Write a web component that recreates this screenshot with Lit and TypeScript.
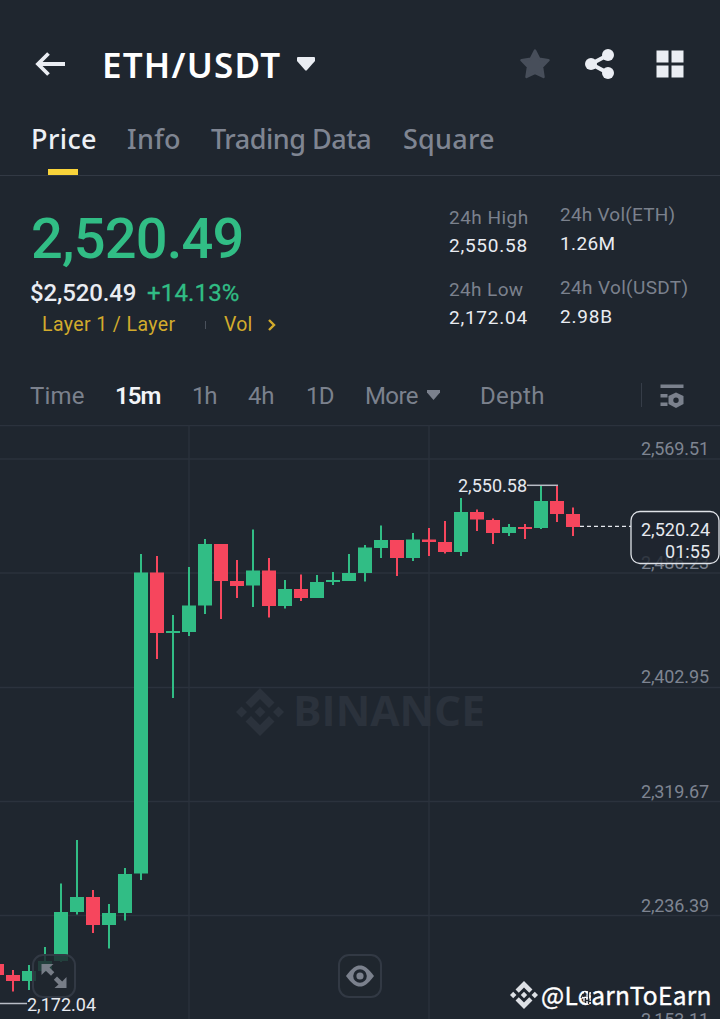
import { LitElement, html, svg, css } from "lit";
import { customElement, property } from "lit/decorators.js";

/** A single-line label whose tracking is adjusted to occupy a given width. */
@customElement("fit-text")
class FitText extends LitElement {
  @property() text = "";
  @property({ type: Number }) w = 0;
  static styles = css`
    :host { display: block; white-space: pre; }
    span { display: inline-block; }
  `;
  render() { return html`<span>${this.text}</span>`; }
  updated() {
    const span = this.renderRoot.querySelector("span") as HTMLElement;
    span.style.letterSpacing = "0px";
    const natural = span.getBoundingClientRect().width;
    const bearings = parseFloat(getComputedStyle(this).fontSize) * 0.06;
    const gaps = Math.max(1, this.text.length - 1);
    span.style.letterSpacing = `${(this.w + bearings - natural) / gaps}px`;
  }
}

type Candle = [x: number, up: 0 | 1, top: number, bottom: number, high: number, low: number];
const candles: Candle[] = [
  [-3, 0, 964, 975, 962, 976],
  [13, 0, 975, 981, 970, 991.5],
  [29, 1, 971, 981, 965, 990],
  [45, 1, 961, 971, 947, 972],
  [61, 1, 912, 961, 883.5, 962],
  [77, 1, 897, 912, 840, 914.5],
  [93, 0, 897, 925, 890, 933],
  [109, 1, 913, 925, 904, 948.5],
  [125, 1, 874, 913, 868, 920.5],
  [141, 1, 572.5, 873.5, 554, 880],
  [157, 0, 572.5, 633, 556, 659],
  [173, 1, 631, 633, 615, 698],
  [189, 1, 605.5, 632, 567, 636],
  [205, 1, 544, 605.5, 539, 614],
  [221, 0, 544, 581, 544, 619],
  [237, 0, 581, 586, 560, 598],
  [253, 1, 570.5, 585.5, 529.5, 607],
  [269, 0, 570.5, 606, 558, 617.5],
  [285, 1, 589, 606, 580, 608.5],
  [301, 0, 589, 598, 574.5, 601],
  [317, 1, 582, 598, 575, 598],
  [333, 1, 580, 582, 572, 585],
  [349, 1, 573, 581, 554, 581],
  [365, 1, 547.5, 573, 545, 581.5],
  [381, 1, 540, 548, 525.5, 558],
  [397, 0, 540, 558, 540, 576],
  [413, 1, 539.5, 558, 533, 561],
  [429, 0, 539.5, 542, 528, 556],
  [445, 0, 542, 552, 521, 553.5],
  [461, 1, 512, 552, 498, 556],
  [477, 0, 512, 519.5, 509.5, 531],
  [493, 0, 520, 533, 518.5, 544],
  [509, 1, 527, 533, 524, 536],
  [525, 0, 527, 529, 524, 539],
  [541, 1, 501, 528, 485, 529],
  [557, 0, 501, 514, 485, 522],
  [573, 0, 514, 527, 507.5, 536],
];

const axis: [string, number][] = [
  ["2,569.51", 455], ["2,486.23", 569], ["2,402.95", 683],
  ["2,319.67", 797.5], ["2,236.39", 911.5], ["2,153.11", 1026],
];

const logo = svg`
  <path d="M24 0 38.500 14.500 33 20 24 11 15 20 9.500 14.500Z"/>
  <path d="M24 48 38.500 33.500 33 28 24 37 15 28 9.500 33.500Z"/>
  <path d="M24 18.500 29.500 24 24 29.500 18.500 24Z"/>
  <path d="M5.500 18.500 11 24 5.500 29.500 0 24Z"/>
  <path d="M42.500 18.500 48 24 42.500 29.500 37 24Z"/>`;

@customElement("price-chart")
class PriceChart extends LitElement {
  static styles = css`
    :host { display: block; position: relative; height: 594px; overflow: hidden; }
    .plot { display: block; }
    .grid { stroke: #2b323d; stroke-width: 1.3; }
    .label { font: 18px Roboto, sans-serif; fill: #7e8491; }
    .mark { font: 18px Roboto, sans-serif; fill: #e6e9ef; }
    .dim { fill: #2b323c; }
    .brand { font: 700 41px "Open Sans", "Noto Sans", sans-serif; }
    .up { fill: #31bd85; }
    .down { fill: #f6465d; }
    .btn {
      position: absolute; top: 529px; box-sizing: border-box; width: 44px; height: 44px;
      border: 2px solid #323944; border-radius: 11px; background: rgba(31, 38, 47, 0.84);
      display: grid; place-items: center;
    }
    .expand { left: 32px; }
    .eye { left: 338px; }
    .credit {
      position: absolute; left: 510px; top: 555px; display: flex; align-items: center; gap: 3px;
      height: 30px; color: #fff; font: 400 24.5px/30px "Noto Sans CJK SC", "Noto Sans", sans-serif;
      -webkit-text-stroke: 0.35px #fff;
    }
    .credit svg { fill: #dde0e5; }
    .credit .speck { position: absolute; left: 69px; top: 10px; }
  `;
  render() {
    return html`
      <svg class="plot" width="720" height="594" viewBox="0 425 720 594">
        ${[425.5, 459, 573, 687.5, 801.5, 915.5].map((y) => svg`<line class="grid" x1="0" x2="720" y1=${y} y2=${y}/>`)}
        ${[189, 429].map((x) => svg`<line class="grid" x1=${x} x2=${x} y1="425" y2="1019"/>`)}
        <g class="dim" transform="translate(236 688)">${logo}</g>
        <text class="dim brand" x="293" y="726" textLength="192" lengthAdjust="spacingAndGlyphs">BINANCE</text>
        ${candles.map(([x, up, top, bottom, high, low]) => svg`
          <g class=${up ? "up" : "down"}>
            <rect x=${x - 1} y=${high} width="2" height=${low - high}/>
            <rect x=${x - 7} y=${top} width="14" height=${bottom - top}/>
          </g>`)}
        ${axis.map(([t, y]) => svg`<text class="label" x="641" y=${y} textLength="68">${t}</text>`)}
        <path d="M527 485.300H558" stroke="#b9bdc6" stroke-width="1.500"/>
        <text class="mark" x="458" y="492" textLength="69">2,550.58</text>
        <path d="M0 1003.500H27" stroke="#b9bdc6" stroke-width="1.500"/>
        <text class="mark" x="27" y="1011" textLength="69">2,172.04</text>
        <path d="M580 526.300H631" stroke="#e6e9ef" stroke-width="1.200" stroke-dasharray="4 3"/>
        <rect x="631" y="511.500" width="88" height="52" rx="9" fill="#1f262f" fill-opacity=".8" stroke="#dfe2e8" stroke-width="1.300"/>
        <text class="mark" x="641" y="536" textLength="69">2,520.24</text>
        <text class="mark" x="665" y="558" textLength="45">01:55</text>
      </svg>
      <div class="btn expand">
        <svg width="28" height="28" viewBox="0 0 28 28" fill="#777d87">
          <path d="M1.500 2H13.500L9.500 5.500 14.300 10.300 11 13.800 5.800 8.800 1.500 13Z"/>
          <path d="M26.500 26H14.500L18.500 22.500 13.800 17.800 17 14.500 22.200 19.400 26.500 15Z"/>
        </svg>
      </div>
      <div class="btn eye">
        <svg width="30" height="24" viewBox="0 0 30 24">
          <path d="M1 12C7 4 10.500 1.500 15 1.500S23 4 29 12C23 20 19.500 22.500 15 22.500S7 20 1 12Z" fill="#7b818d"/>
          <circle cx="15" cy="12" r="5.200" fill="#7b818d" stroke="#1f262f" stroke-width="3.200"/>
        </svg>
      </div>
      <div class="credit">
        <svg width="28" height="28" viewBox="0 0 48 48">${logo}</svg>
        <fit-text text="@LearnToEarn" w="169"></fit-text>
        <svg class="speck" width="13" height="15" viewBox="0 0 13 15" fill="none">
          <path d="M4 4 2 8M6 2 4.500 7M9.500 1V14M6.500 8V13" stroke="#1f262f" stroke-width="1.200"/>
          <path d="M8 1V14M11.200 2V14M5 9V14" stroke="#fff" stroke-width="1.300" stroke-dasharray="2.500 .8"/>
        </svg>
      </div>`;
  }
}

@customElement("app-root")
class AppRoot extends LitElement {
  static styles = css`
    :host {
      display: block; width: 720px; height: 1019px; overflow: hidden;
      background: #1f262f; color: #e9ecf2; font-family: Roboto, sans-serif;
    }
    header {
      box-sizing: border-box; height: 103px; padding: 24px 36px 0 35px; display: flex; align-items: center;
      font-family: "Noto Sans", sans-serif;
    }
    .pair { width: 195px; margin-left: 36px; padding-top: 2px; font-size: 35px; font-weight: 600; line-height: 48px; color: #fff; }
    .star { margin-left: 204px; }
    .share { margin-left: 34px; }
    .apps { margin-left: 41px; }
    nav {
      height: 73px; box-sizing: border-box; padding: 19px 0 0 32px; border-bottom: 1px solid #323944;
      display: grid; grid-template-columns: 96px 84px 192px auto; align-items: start;
      font: 500 27px/34px "Noto Sans", sans-serif; color: #7f8592;
    }
    nav fit-text { margin-left: -1px; }
    .tab.on { color: #edf0f5; }
    .bar { width: 30px; height: 6px; margin: 13px 0 0 16px; background: #f8d33a; }
    .summary { height: 191px; box-sizing: border-box; padding: 24px 0 0 30px; display: grid; grid-template-columns: 419px 111px auto; }
    .price { padding: 9px 0 0 1px; font-size: 56px; font-weight: 500; line-height: 60px; color: #31bd85; }
    .change { display: flex; margin-top: 10px; font-size: 24px; font-weight: 500; line-height: 28px; }
    .usd { width: 117px; }
    .pct { color: #31bd85; font-weight: 400; -webkit-text-stroke: 0.3px; }
    .tags { display: flex; align-items: center; padding: 5px 0 0 12px; font-size: 19.5px; line-height: 25px; color: #d2ab2c; }
    .tags .layer { width: 163px; }
    .tags i { width: 1px; height: 8px; background: #4a515c; margin-right: 18px; }
    .tags .vol { width: 44px; }
    .col { padding-top: 4px; font-size: 19px; line-height: 28px; }
    .col.second { padding-top: 1px; line-height: 28.500px; }
    .stat { margin-bottom: 16px; }
    .name { color: #7b818d; }
    .frames {
      height: 58px; box-sizing: border-box; padding: 0 36px 0 30px; display: grid; align-items: center;
      grid-template-columns: 85px 77px 56px 58px 59px 115px 1fr auto auto;
      font-size: 24px; line-height: 32px; color: #7b818d;
    }
    .frames .on { color: #f3f5f9; font-weight: 600; }
    .more { display: flex; align-items: center; gap: 9px; }
    .more svg { margin-bottom: 3px; }
    .rule { width: 1.500px; height: 24px; margin: 0 18px 3px 0; background: #363d48; }
    svg { display: block; }
  `;
  render() {
    const stat = (name: string, nw: number, value: string, vw: number) => html`
      <div class="stat">
        <fit-text class="name" text=${name} w=${nw}></fit-text>
        <fit-text text=${value} w=${vw}></fit-text>
      </div>`;
    return html`
      <header>
        <svg width="31" height="24" viewBox="0 0 31 24" fill="none" stroke="#eaedf3" stroke-width="3.800">
          <path d="M13.500 1.500 3 12 13.500 22.500M3 12H30"/>
        </svg>
        <fit-text class="pair" text="ETH/USDT" w="176"></fit-text>
        <svg width="18" height="14" viewBox="0 0 18 14" fill="#eaedf3"><path d="M1 0H17Q18 0 18 1V4L9.800 13.300Q9 14 8.200 13.300L0 4V1Q0 0 1 0Z"/></svg>
        <svg class="star" width="32" height="32" viewBox="0 0 32 32" fill="#474e5a" stroke="#474e5a" stroke-width="2.500" stroke-linejoin="round">
          <path d="M16 2.500 20.200 10.700 29.500 12.200 23 18.900 24.500 29 16 24.800 7.500 29 9 18.900 2.500 12.200 11.800 10.700Z"/>
        </svg>
        <svg class="share" width="30" height="30" viewBox="0 0 30 30" fill="#eaedf3">
          <path d="M23 6 6 15 23 24" fill="none" stroke="#eaedf3" stroke-width="4"/>
          <circle cx="23" cy="6" r="6"/><circle cx="6" cy="15" r="6"/><circle cx="23" cy="24" r="6"/>
        </svg>
        <svg class="apps" width="28" height="28" viewBox="0 0 28 28" fill="#eaedf3">
          <path d="M.5.5H12.500V12.500H.5ZM15.500.5H27.500V12.500H15.500ZM.5 15.500H12.500V27.500H.5ZM15.500 15.500H27.500V27.500H15.500Z"/>
        </svg>
      </header>
      <nav>
        <div class="tab on"><fit-text text="Price" w="64"></fit-text><div class="bar"></div></div>
        <fit-text text="Info" w="52"></fit-text>
        <fit-text text="Trading Data" w="159"></fit-text>
        <fit-text text="Square" w="90"></fit-text>
      </nav>
      <section class="summary">
        <div>
          <fit-text class="price" text="2,520.49" w="210"></fit-text>
          <div class="change">
            <fit-text class="usd" text="$2,520.49" w="105"></fit-text>
            <fit-text class="pct" text="+14.13%" w="91"></fit-text>
          </div>
          <div class="tags">
            <fit-text class="layer" text="Layer 1 / Layer" w="132"></fit-text><i></i>
            <fit-text class="vol" text="Vol" w="27"></fit-text>
            <svg width="8" height="12" viewBox="0 0 8 12" fill="none" stroke="#d2ab2c" stroke-width="2.400"><path d="M1 1 6 6 1 11"/></svg>
          </div>
        </div>
        <div class="col">
          ${stat("24h High", 78, "2,550.58", 77)}
          ${stat("24h Low", 73, "2,172.04", 77)}
        </div>
        <div class="col second">
          ${stat("24h Vol(ETH)", 114, "1.26M", 54)}
          ${stat("24h Vol(USDT)", 127, "2.98B", 51)}
        </div>
      </section>
      <section class="frames">
        <fit-text text="Time" w="53"></fit-text>
        <fit-text class="on" text="15m" w="45"></fit-text>
        <fit-text text="1h" w="24"></fit-text>
        <fit-text text="4h" w="25"></fit-text>
        <fit-text text="1D" w="27"></fit-text>
        <div class="more">
          <fit-text text="More" w="52"></fit-text>
          <svg width="13" height="10" viewBox="0 0 13 10" fill="#7b818d"><path d="M0 0H13V2.500L6.500 10 0 2.500Z"/></svg>
        </div>
        <fit-text text="Depth" w="63"></fit-text>
        <div class="rule"></div>
        <svg width="24" height="24" viewBox="0 0 24 24" fill="#7b818d">
          <path d="M.5.5H23.500V4H.5ZM.5 10H7.500V13.500H.5ZM.5 18.500H7.500V22H.5Z"/>
          <path d="M16 8.500 23.500 12V20L16 24 8.500 20V12ZM16 13.500A2.700 2.700 0 1 0 16 18.900 2.700 2.700 0 1 0 16 13.500Z" fill-rule="evenodd"/>
        </svg>
      </section>
      <price-chart></price-chart>`;
  }
}
